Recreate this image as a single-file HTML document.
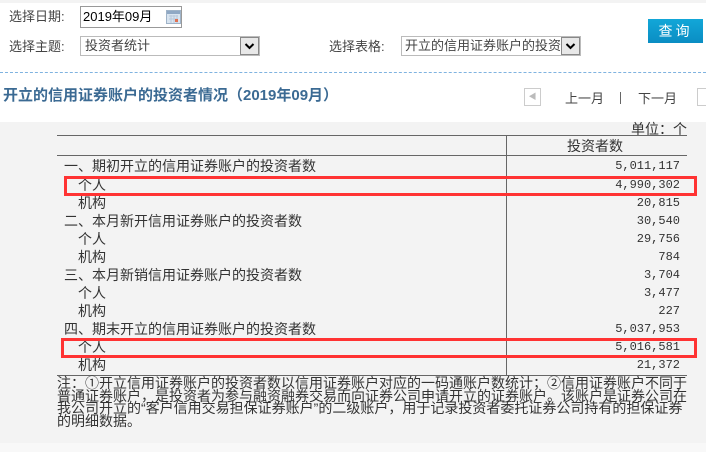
<!DOCTYPE html>
<html><head><meta charset="utf-8"><style>
body{margin:0;width:706px;height:452px;overflow:hidden;background:#fff;font-family:"Liberation Sans","Noto Sans CJK SC",sans-serif;position:relative;color:#333}
.a{position:absolute;white-space:nowrap}
.lbl{font-size:13px;color:#444;line-height:16px}
.t{font-size:14px;line-height:18px;color:#333}
.n{font-family:"Liberation Mono",monospace;font-size:12px;line-height:18px;right:26px;color:#333}
.dd{width:19px;height:18px;background:#e8e8e8;border:1px solid #888;box-sizing:border-box}
</style></head><body>
<div class="a" style="left:0;top:0;width:706px;height:3px;background:#f3f3f3"></div>
<div class="a lbl" style="left:9px;top:9px">选择日期:</div>
<div class="a" style="left:80px;top:6px;width:102px;height:22px;border:1px solid #999;box-sizing:border-box;font-size:13px;line-height:20px;color:#000;padding-left:2px">2019年09月</div>
<svg class="a" style="left:166px;top:10px" width="15" height="14"><rect x="0.5" y="0.5" width="14" height="13" fill="#d8e4f0" stroke="#9fb3c8"/><rect x="1" y="1" width="13" height="3" fill="#8fa8c4"/><path d="M3 6h9M3 9h9M5 5v8M8 5v8M11 5v8" stroke="#b8c8da"/><rect x="9" y="9" width="3" height="3" fill="#e07050"/></svg>
<div class="a lbl" style="left:9px;top:39px">选择主题:</div>
<div class="a" style="left:80px;top:36px;width:180px;height:20px;border:1px solid #bbb;box-sizing:border-box;font-size:13px;line-height:18px;color:#444;padding-left:4px">投资者统计</div>
<div class="a dd" style="left:240px;top:37px"><svg width="17" height="16"><path d="M4.5 6l4 4 4-4" fill="none" stroke="#000" stroke-width="2"/></svg></div>
<div class="a lbl" style="left:329px;top:39px">选择表格:</div>
<div class="a" style="left:401px;top:36px;width:180px;height:20px;border:1px solid #bbb;box-sizing:border-box;font-size:13px;line-height:18px;color:#444;padding-left:3px;overflow:hidden">开立的信用证券账户的投资</div>
<div class="a dd" style="left:561px;top:37px"><svg width="17" height="16"><path d="M4.5 6l4 4 4-4" fill="none" stroke="#000" stroke-width="2"/></svg></div>
<div class="a" style="left:648px;top:19px;width:55px;height:24px;background:linear-gradient(#12a7d8,#0a8dc3);color:#fff;font-size:14px;line-height:24px;text-align:center;letter-spacing:3px">查询</div>
<div class="a" style="left:0;top:72px;width:706px;border-top:1px dashed #7fb3e0"></div>
<div class="a" style="left:3px;top:86px;font-size:15px;font-weight:bold;color:#3b6a93;line-height:19px">开立的信用证券账户的投资者情况（2019年09月）</div>
<div class="a" style="left:524px;top:88px;width:17px;height:18px;border:1px solid #ccc;box-sizing:border-box;color:#bbb;font-size:8px;text-align:center;line-height:16px">◀</div>
<div class="a lbl" style="left:565px;top:91px">上一月</div>
<div class="a" style="left:620px;top:92px;width:1px;height:12px;background:#666"></div>
<div class="a lbl" style="left:638px;top:91px">下一月</div>
<div class="a" style="left:697px;top:88px;width:17px;height:18px;border:1px solid #ccc;box-sizing:border-box"></div>
<div class="a" style="left:0;top:122px;width:706px;height:321px;background:#f3f3f3"></div>
<div class="a" style="left:0;top:443px;width:706px;height:9px;background:#f8f8f8"></div>
<div class="a t" style="right:19px;top:120px;text-align:right">单位：个</div>
<div class="a" style="left:57px;top:135px;width:630px;border-top:1px solid #666"></div>
<div class="a" style="left:57px;top:155px;width:630px;border-top:1px solid #666"></div>
<div class="a" style="left:57px;top:375px;width:630px;border-top:1px solid #666"></div>
<div class="a" style="left:506px;top:135px;width:1px;height:240px;background:#666"></div>
<div class="a t" style="left:567px;top:137px">投资者数</div>
<div class="a t" style="left:64px;top:157px">一、期初开立的信用证券账户的投资者数</div>
<div class="a t" style="left:78px;top:176px">个人</div>
<div class="a t" style="left:78px;top:194px">机构</div>
<div class="a t" style="left:64px;top:212px">二、本月新开信用证券账户的投资者数</div>
<div class="a t" style="left:78px;top:230px">个人</div>
<div class="a t" style="left:78px;top:248px">机构</div>
<div class="a t" style="left:64px;top:266px">三、本月新销信用证券账户的投资者数</div>
<div class="a t" style="left:78px;top:284px">个人</div>
<div class="a t" style="left:78px;top:302px">机构</div>
<div class="a t" style="left:64px;top:320px">四、期末开立的信用证券账户的投资者数</div>
<div class="a t" style="left:78px;top:338px">个人</div>
<div class="a t" style="left:78px;top:356px">机构</div>
<div class="a n" style="top:157px">5,011,117</div>
<div class="a n" style="top:176px">4,990,302</div>
<div class="a n" style="top:194px">20,815</div>
<div class="a n" style="top:212px">30,540</div>
<div class="a n" style="top:230px">29,756</div>
<div class="a n" style="top:248px">784</div>
<div class="a n" style="top:266px">3,704</div>
<div class="a n" style="top:284px">3,477</div>
<div class="a n" style="top:302px">227</div>
<div class="a n" style="top:320px">5,037,953</div>
<div class="a n" style="top:338px">5,016,581</div>
<div class="a n" style="top:356px">21,372</div>
<div class="a" style="left:64px;top:176px;width:633px;height:20px;border:3px solid #f33;box-sizing:border-box"></div>
<div class="a" style="left:61px;top:338px;width:636px;height:20px;border:3px solid #f33;box-sizing:border-box"></div>
<div class="a" style="left:57px;top:377px;width:632px;font-size:14px;line-height:12.5px;color:#333;white-space:normal;word-break:break-all">注：①开立信用证券账户的投资者数以信用证券账户对应的一码通账户数统计；②信用证券账户不同于普通证券账户，是投资者为参与融资融券交易而向证券公司申请开立的证券账户。该账户是证券公司在我公司开立的“客户信用交易担保证券账户”的二级账户，用于记录投资者委托证券公司持有的担保证券的明细数据。</div>
</body></html>
